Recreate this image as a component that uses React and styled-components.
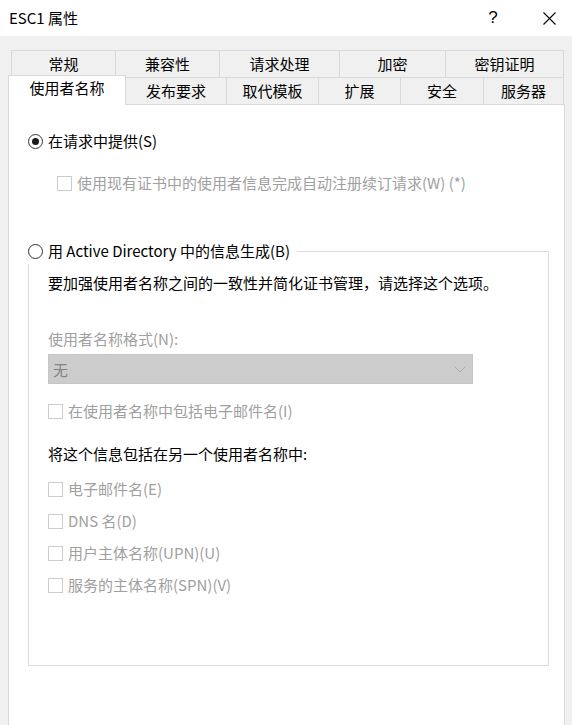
import React from "react";
import styled, { createGlobalStyle } from "styled-components";

const GlobalStyle = createGlobalStyle`
  html, body {
    margin: 0;
    padding: 0;
    background: #f0f0f0;
  }
  body {
    font-family: "Noto Sans CJK SC", "Liberation Sans", sans-serif;
    font-size: 15px;
    color: #000;
  }
`;

const Window = styled.div`
  width: 572px;
  height: 725px;
  display: flex;
  flex-direction: column;
  background: #f0f0f0;
  overflow: hidden;
`;

const TitleBar = styled.div`
  height: 36px;
  flex: none;
  background: #fff;
  display: flex;
  align-items: center;
  padding-left: 9px;
  gap: 10px;
`;

const Title = styled.div`
  flex: 1;
  font-size: 15px;
  line-height: 20px;
`;

const TitleButton = styled.div`
  width: 46px;
  height: 36px;
  display: flex;
  align-items: center;
  justify-content: center;
  font-family: "Liberation Sans", sans-serif;
  font-size: 17px;
`;

const Tabs = styled.div`
  flex: none;
  padding-top: 14px;
  display: flex;
  flex-direction: column;
`;

const TabRow = styled.div`
  display: flex;
  align-items: flex-end;
  height: 27px;
  padding-left: ${(p) => p.$indent}px;
`;

const Tab = styled.div`
  box-sizing: border-box;
  width: ${(p) => p.$width}px;
  height: ${(p) => (p.$active ? 30 : 27)}px;
  margin-bottom: ${(p) => (p.$active ? -1 : 0)}px;
  margin-left: ${(p) => (p.$first ? 0 : -1)}px;
  border: 1px solid #d9d9d9;
  border-bottom: none;
  background: ${(p) => (p.$active ? "#fff" : "#f0f0f0")};
  position: relative;
  z-index: ${(p) => (p.$active ? 2 : 1)};
  display: flex;
  justify-content: center;
  align-items: ${(p) => (p.$active ? "flex-start" : "center")};
  padding-top: ${(p) => (p.$active ? 2 : 0)}px;
  font-size: 15px;
  line-height: 20px;
  white-space: nowrap;
`;

const Panel = styled.div`
  flex: 1;
  margin: 0 7px 0 8px;
  border: 1px solid #d9d9d9;
  border-bottom: none;
  background: #fff;
  padding: 26px 15px 0 19px;
  display: flex;
  flex-direction: column;
`;

const Option = styled.label`
  display: flex;
  align-items: center;
  gap: 5px;
  height: 20px;
  line-height: 20px;
  margin-left: ${(p) => p.$indent || 0}px;
  margin-top: ${(p) => p.$top || 0}px;
  color: ${(p) => (p.$disabled ? "#a0a0a0" : "#000")};
  white-space: nowrap;
`;

const Radio = styled.span`
  box-sizing: border-box;
  width: 15px;
  height: 15px;
  flex: none;
  border-radius: 50%;
  border: 1px solid #333;
  background: #fff;
  display: flex;
  align-items: center;
  justify-content: center;
  &::after {
    content: "";
    width: 7px;
    height: 7px;
    border-radius: 50%;
    background: ${(p) => (p.$checked ? "#1a1a1a" : "transparent")};
  }
`;

const Check = styled.span`
  box-sizing: border-box;
  width: 15px;
  height: 15px;
  flex: none;
  border: 1px solid #cccccc;
  background: #fff;
`;

const Group = styled.fieldset`
  margin: 45px 0 0 0;
  padding: 12px 19px 70px 19px;
  border: 1px solid #dcdcdc;
  display: flex;
  flex-direction: column;
  min-width: 0;
`;

const Legend = styled.legend`
  padding: 0 7px 0 0;
  margin-left: -20px;
  margin-bottom: -3px;
  line-height: 20px;
  height: 26px;
  display: flex;
  align-items: center;
  background: #fff;
`;

const Text = styled.div`
  line-height: 20px;
  height: 20px;
  margin-top: ${(p) => p.$top || 0}px;
  color: ${(p) => (p.$disabled ? "#a0a0a0" : "#000")};
  white-space: nowrap;
`;

const Combo = styled.div`
  box-sizing: border-box;
  width: 425px;
  height: 30px;
  margin-top: 5px;
  background: #cccccc;
  border: 1px solid #c6c6c6;
  display: flex;
  align-items: center;
  justify-content: space-between;
  padding: 0 6px 0 4px;
  color: #838383;
`;

const rowOne = [
  { label: "常规", width: 105 },
  { label: "兼容性", width: 105 },
  { label: "请求处理", width: 121 },
  { label: "加密", width: 107 },
  { label: "密钥证明", width: 119 },
];

const rowTwo = [
  { label: "使用者名称", width: 118, active: true },
  { label: "发布要求", width: 102 },
  { label: "取代模板", width: 93 },
  { label: "扩展", width: 83 },
  { label: "安全", width: 84 },
  { label: "服务器", width: 81 },
];

const altNames = [
  "电子邮件名(E)",
  "DNS 名(D)",
  "用户主体名称(UPN)(U)",
  "服务的主体名称(SPN)(V)",
];

export default function App() {
  return (
    <>
      <GlobalStyle />
      <Window>
        <TitleBar>
          <Title>ESC1 属性</Title>
          <TitleButton>?</TitleButton>
          <TitleButton>
            <svg width="13" height="13" viewBox="0 0 13 13">
              <path d="M0.5 0.5 L12.5 12.5 M12.5 0.5 L0.5 12.5" stroke="#000" strokeWidth="1.1" />
            </svg>
          </TitleButton>
        </TitleBar>

        <Tabs>
          <TabRow $indent={11}>
            {rowOne.map((t, i) => (
              <Tab key={t.label} $width={t.width} $first={i === 0}>
                {t.label}
              </Tab>
            ))}
          </TabRow>
          <TabRow $indent={8}>
            {rowTwo.map((t, i) => (
              <Tab key={t.label} $width={t.width} $first={i === 0} $active={t.active}>
                {t.label}
              </Tab>
            ))}
          </TabRow>
        </Tabs>

        <Panel>
          <Option>
            <Radio $checked />
            在请求中提供(S)
          </Option>
          <Option $indent={29} $top={22} $disabled>
            <Check />
            使用现有证书中的使用者信息完成自动注册续订请求(W) (*)
          </Option>

          <Group>
            <Legend>
              <Option>
                <Radio />
                用 Active Directory 中的信息生成(B)
              </Option>
            </Legend>
            <Text>要加强使用者名称之间的一致性并简化证书管理，请选择这个选项。</Text>
            <Text $top={36} $disabled>使用者名称格式(N):</Text>
            <Combo>
              <span>无</span>
              <svg width="12" height="7" viewBox="0 0 12 7">
                <path d="M0.5 0.5 L6 6 L11.5 0.5" fill="none" stroke="#a9a9a9" strokeWidth="1" />
              </svg>
            </Combo>
            <Option $top={17} $disabled>
              <Check />
              在使用者名称中包括电子邮件名(I)
            </Option>
            <Text $top={23}>将这个信息包括在另一个使用者名称中:</Text>
            {altNames.map((n, i) => (
              <Option key={n} $top={i === 0 ? 15 : 12} $disabled>
                <Check />
                {n}
              </Option>
            ))}
          </Group>
        </Panel>
      </Window>
    </>
  );
}
